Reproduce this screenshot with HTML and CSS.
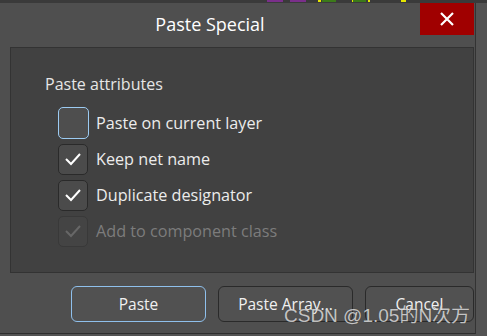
FILE: index.html
```html
<!DOCTYPE html>
<html>
<head>
<meta charset="utf-8">
<link rel="stylesheet" href="styles.css">
</head>
<body>
<div class="screen">
  <div class="topstrip">
    <span class="bit purple b1"></span>
    <span class="bit purple b2"></span>
    <span class="bit yellow b3"></span>
    <span class="bit green b4"></span>
    <span class="bit yellow b5"></span>
    <span class="bit green b6"></span>
    <span class="bit yellow b7"></span>
    <span class="bit yellow b8"></span>
  </div>
  <div class="dialog">
    <div class="titlebar">
      <div class="title">Paste Special</div>
      <div class="close">
        <svg width="16" height="16" viewBox="0 0 16 16"><path d="M2 2 L14 14 M14 2 L2 14" stroke="#fff" stroke-width="2.2" fill="none"/></svg>
      </div>
    </div>
    <div class="group">
      <div class="group-title">Paste attributes</div>
      <div class="options">
        <div class="option">
          <span class="box focus"></span>
          <span class="label">Paste on current layer</span>
        </div>
        <div class="option">
          <span class="box"><svg width="18" height="14" viewBox="0 0 18 14"><path d="M2 7 L7 12 L16 2" stroke="#fff" stroke-width="2" fill="none"/></svg></span>
          <span class="label">Keep net name</span>
        </div>
        <div class="option">
          <span class="box"><svg width="18" height="14" viewBox="0 0 18 14"><path d="M2 7 L7 12 L16 2" stroke="#fff" stroke-width="2" fill="none"/></svg></span>
          <span class="label">Duplicate designator</span>
        </div>
        <div class="option disabled">
          <span class="box"><svg width="18" height="14" viewBox="0 0 18 14"><path d="M2 7 L7 12 L16 2" stroke="#676767" stroke-width="2" fill="none"/></svg></span>
          <span class="label">Add to component class</span>
        </div>
      </div>
    </div>
    <div class="buttons">
      <button class="btn primary wide">Paste</button>
      <button class="btn wide">Paste Array...</button>
      <button class="btn narrow">Cancel</button>
    </div>
    <div class="watermark">CSDN @1.05的N次方</div>
  </div>
</div>
</body>
</html>
```
FILE: styles.css
```css
html, body {
  margin: 0;
  padding: 0;
}
body {
  width: 487px;
  height: 336px;
  background: #6b6b6b;
  overflow: hidden;
  font-family: "Open Sans", "Noto Sans", "Noto Sans CJK SC", sans-serif;
}
.screen {
  width: 487px;
  height: 336px;
  background: #535353;
  position: relative;
}
.topstrip {
  height: 3px;
  background: #3a3a3a;
  position: relative;
}
.bit {
  position: absolute;
  top: 0;
  height: 2px;
}
.purple { background: #7a2f8a; }
.yellow { background: #e6e600; }
.green { background: #3c7a1a; }
.b1 { left: 267px; width: 16px; }
.b2 { left: 290px; width: 16px; }
.b3 { left: 318px; width: 3px; }
.b4 { left: 322px; width: 14px; }
.b5 { left: 352px; width: 3px; }
.b6 { left: 353px; width: 13px; }
.b7 { left: 401px; width: 5px; }
.b8 { left: 368px; width: 2px; }
.dialog {
  width: 475px;
  height: 330px;
  background: #4f4f4f;
  border-right: 1px solid #333;
  border-bottom: 1px solid #2e2e2e;
  position: relative;
  display: flex;
  flex-direction: column;
}
.titlebar {
  height: 32px;
  display: flex;
  align-items: stretch;
}
.title {
  flex: 1;
  text-align: center;
  color: #ffffff;
  font-size: 18px;
  line-height: 32px;
  padding-top: 5px;
  height: 27px;
}
.close {
  width: 54px;
  margin-right: 1px;
  background: #a00000;
  display: flex;
  align-items: center;
  justify-content: center;
}
.group {
  margin: 12px 1px 0 10px;
  height: 224px;
  background: #414141;
  border: 1px solid #333;
  padding-left: 34px;
}
.group-title {
  color: #e6e6e6;
  font-size: 16px;
  margin-top: 25px;
  line-height: 22px;
}
.options {
  margin-left: 13px;
  margin-top: 12px;
  display: flex;
  flex-direction: column;
  gap: 4px;
}
.option {
  display: flex;
  align-items: center;
  height: 32px;
}
.box {
  width: 30px;
  height: 31px;
  box-sizing: border-box;
  border: 1px solid #2a2a2a;
  border-radius: 5px;
  background: #4b4b4b;
  display: flex;
  align-items: center;
  justify-content: center;
  margin-right: 8px;
}
.box.focus {
  border: 1.5px solid #9ccbf2;
  width: 31px;
  height: 32px;
  margin-right: 7px;
  border-radius: 5px;
  background: #4e4e4e;
}
.label {
  color: #ececec;
  font-size: 16.2px;
}
.disabled .box {
  background: #444;
  border-color: #393939;
}
.disabled .label {
  color: #7c7c7c;
}
.buttons {
  margin-top: 13px;
  display: flex;
  justify-content: flex-end;
  gap: 12px;
  margin-right: 1px;
}
.btn {
  height: 36px;
  box-sizing: border-box;
  background: #515151;
  border: 1px solid #2a2a2a;
  border-radius: 6px;
  color: #f0f0f0;
  font-family: "Open Sans", "Noto Sans", sans-serif;
  font-size: 15.5px;
  padding: 0;
}
.btn.wide { width: 135px; }
.btn.narrow { width: 109px; }
.btn.primary {
  border: 1.5px solid #8fc0ec;
}
.watermark {
  position: absolute;
  left: 284px;
  top: 301px;
  color: rgba(235, 235, 235, 0.78);
  font-size: 19px;
  line-height: 24px;
  font-family: "Liberation Sans", "Noto Sans CJK SC", sans-serif;
  text-shadow: 0 0 1px rgba(0,0,0,0.3);
}
```
